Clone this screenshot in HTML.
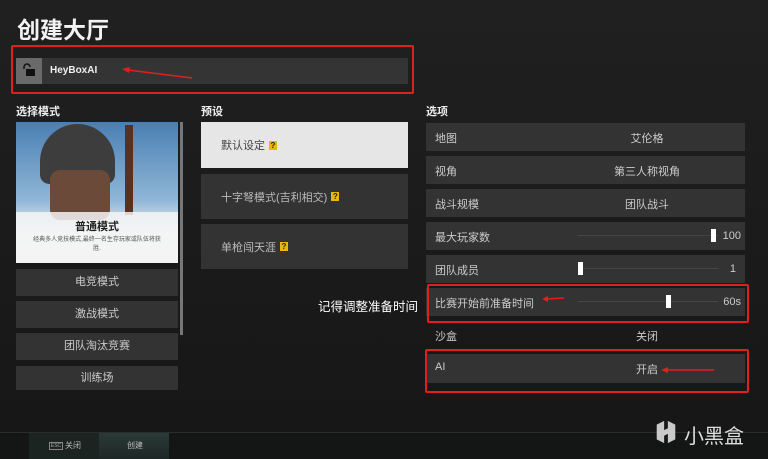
<!DOCTYPE html>
<html><head><meta charset="utf-8"><style>
*{margin:0;padding:0;box-sizing:border-box}
body{width:768px;height:459px;overflow:hidden;background:linear-gradient(#202020,#161616);font-family:"Liberation Sans","Noto Sans CJK SC",sans-serif;color:#ddd;position:relative}
.a{position:absolute}
.h{font-size:11px;font-weight:bold;color:#eee}
.mb{position:absolute;left:16px;width:162px;background:#333;color:#ccc;font-size:11px;text-align:center}
.pr{position:absolute;left:201px;width:207px;background:#333;color:#bbb;font-size:11px;padding-left:20px;display:flex;align-items:center}
.q{display:inline-block;width:8px;height:9px;background:#e8b800;color:#222;font-size:8px;line-height:9px;text-align:center;font-weight:bold;margin-left:4px}
.op{position:absolute;left:426px;width:319px;height:28px;background:#333;font-size:11px;color:#ccc}
.op .l{position:absolute;left:9px;top:7px}
.op .v{position:absolute;left:181px;width:80px;text-align:center;top:7px}
.tr{position:absolute;left:152px;width:140px;top:13px;height:1px;background:#444}
.th{position:absolute;top:7px;width:5px;height:13px;background:#fff}
.nv{position:absolute;right:4px;top:8px}
.rb{position:absolute;border:2px solid #e0201c;border-radius:2px}
</style></head><body>
<div class="a" style="left:17px;top:11px;font-size:23px;font-weight:bold;color:#f2f2f2">创建大厅</div>
<div class="a" style="left:16px;top:58px;width:392px;height:26px;background:#343434"></div>
<div class="a" style="left:16px;top:58px;width:26px;height:26px;background:#6a6a6a"></div>
<svg class="a" style="left:21px;top:62px" width="16" height="16" viewBox="0 0 16 16"><path d="M3 7V5a3 3 0 0 1 6 0" fill="none" stroke="#111" stroke-width="1.5"/><rect x="5" y="7" width="9" height="7" fill="#111"/></svg>
<div class="a" style="left:50px;top:65px;font-size:10px;font-weight:bold;color:#eee">HeyBoxAI</div>
<svg class="a" style="left:120px;top:66px" width="75" height="14"><path d="M72 12 L8 4" stroke="#e02020" stroke-width="1.5"/><path d="M2 3 L10 1 L9 7 Z" fill="#e02020"/></svg>
<div class="rb" style="left:11px;top:45px;width:403px;height:49px"></div>

<div class="a h" style="left:16px;top:103px">选择模式</div>
<div class="a h" style="left:201px;top:103px">预设</div>
<div class="a h" style="left:426px;top:103px">选项</div>

<div class="a" style="left:16px;top:122px;width:162px;height:141px;background:linear-gradient(#4a7fb3 0%,#8fb6d6 55%,#e8eef2 78%,#f0f0f0 100%)"></div>
<div class="a" style="left:40px;top:124px;width:75px;height:60px;border-radius:40px 40px 10px 10px;background:#3d3d3d"></div>
<div class="a" style="left:50px;top:170px;width:60px;height:50px;background:#6b4a3a;border-radius:10px"></div>
<div class="a" style="left:125px;top:125px;width:8px;height:90px;background:#5a3020"></div>
<div class="a" style="left:16px;top:212px;width:162px;height:51px;background:rgba(245,245,245,.85)"></div>
<div class="a" style="left:16px;top:218px;width:162px;text-align:center;font-size:11px;font-weight:bold;color:#222">普通模式</div>
<div class="a" style="left:30px;top:236px;width:134px;text-align:center;font-size:6px;line-height:9px;color:#555">经典多人竞技模式,最终一名生存玩家或队伍将获胜.</div>
<div class="a" style="left:180px;top:122px;width:3px;height:213px;background:#777"></div>
<div class="mb" style="top:269px;height:27px;line-height:27px">电竞模式</div>
<div class="mb" style="top:301px;height:27px;line-height:27px">激战模式</div>
<div class="mb" style="top:333px;height:27px;line-height:27px">团队淘汰竞赛</div>
<div class="mb" style="top:366px;height:24px;line-height:24px">训练场</div>

<div class="pr" style="top:122px;height:46px;background:#e6e6e6;color:#444">默认设定<span class="q">?</span></div>
<div class="pr" style="top:174px;height:45px">十字弩模式(吉利相交)<span class="q">?</span></div>
<div class="pr" style="top:224px;height:45px">单枪闯天涯<span class="q">?</span></div>

<div class="op" style="top:123px"><span class="l">地图</span><span class="v">艾伦格</span></div>
<div class="op" style="top:156px"><span class="l">视角</span><span class="v">第三人称视角</span></div>
<div class="op" style="top:189px"><span class="l">战斗规模</span><span class="v">团队战斗</span></div>
<div class="op" style="top:222px"><span class="l">最大玩家数</span><div class="tr"></div><div class="th" style="left:285px"></div><span class="nv">100</span></div>
<div class="op" style="top:255px"><span class="l">团队成员</span><div class="tr"></div><div class="th" style="left:152px"></div><span class="nv" style="right:9px">1</span></div>
<div class="op" style="top:288px"><span class="l">比赛开始前准备时间</span><div class="tr"></div><div class="th" style="left:240px"></div><span class="nv">60s</span></div>
<div class="op" style="top:321px;background:transparent"><span class="l">沙盒</span><span class="v">关闭</span></div>
<div class="op" style="top:354px;height:29px"><span class="l">AI</span><span class="v">开启</span></div>
<svg class="a" style="left:540px;top:294px" width="25" height="10"><path d="M24 4 L6 5" stroke="#e02020" stroke-width="1.5"/><path d="M2 5 L8 2 L8 8Z" fill="#e02020"/></svg>
<svg class="a" style="left:660px;top:365px" width="55" height="10"><path d="M54 5 L6 5" stroke="#e02020" stroke-width="1.5"/><path d="M1 5 L8 2 L8 8Z" fill="#e02020"/></svg>
<div class="rb" style="left:427px;top:284px;width:322px;height:39px"></div>
<div class="rb" style="left:425px;top:349px;width:324px;height:44px"></div>
<div class="a" style="left:318px;top:296px;font-size:12.5px;color:#fff">记得调整准备时间</div>

<div class="a" style="left:0;top:432px;width:768px;height:27px;background:#141616;border-top:1px solid #2a2e2a"></div>
<div class="a" style="left:29px;top:433px;width:70px;height:26px;background:#1c2422"></div>
<div class="a" style="left:99px;top:433px;width:70px;height:26px;background:linear-gradient(#2a3a36,#1e2826)"></div>
<div class="a" style="left:49px;top:442px;width:14px;height:8px;border:1px solid #888;font-size:5px;color:#aaa;line-height:6px;text-align:center">ESC</div>
<div class="a" style="left:65px;top:440px;font-size:8px;color:#bbb">关闭</div>
<div class="a" style="left:127px;top:440px;font-size:8px;color:#bbb">创建</div>
<svg class="a" style="left:653px;top:419px" width="26" height="26" viewBox="0 0 28 28"><path d="M4 6 L12 2 V12 L16 10 V2 L24 6 V22 L16 26 V16 L12 18 V26 L4 22Z" fill="#ddd" opacity=".9"/></svg>
<div class="a" style="left:684px;top:420px;font-size:20px;color:#ddd">小黑盒</div>
</body></html>
